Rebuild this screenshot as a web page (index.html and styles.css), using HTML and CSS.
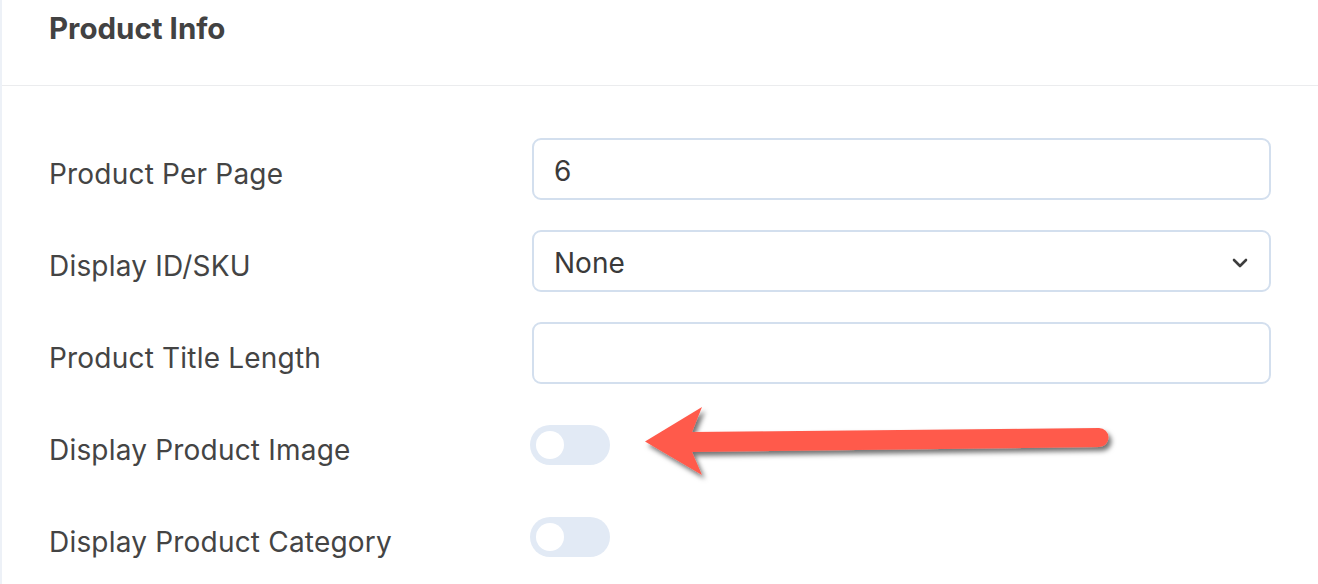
FILE: index.html
```html
<!DOCTYPE html>
<html>
<head>
<meta charset="utf-8">
<link rel="stylesheet" href="styles.css">
</head>
<body>
<div class="card">
  <div class="card-header"><h2 class="title">Product Info</h2></div>
  <div class="form">
    <label class="label">Product Per Page</label>
    <div class="field"><input class="input" type="text" value="6"></div>

    <label class="label">Display ID/SKU</label>
    <div class="field select-wrap">
      <div class="input select">None</div>
      <svg class="chevron" width="16" height="10" viewBox="0 0 16 10"><path d="M2 2 L8 8 L14 2" fill="none" stroke="#3d3d3d" stroke-width="2.6" stroke-linecap="round" stroke-linejoin="round"/></svg>
    </div>

    <label class="label">Product Title Length</label>
    <div class="field"><input class="input" type="text" value=""></div>

    <label class="label">Display Product Image</label>
    <div class="field"><span class="toggle"><span class="knob"></span></span></div>

    <label class="label">Display Product Category</label>
    <div class="field"><span class="toggle"><span class="knob"></span></span></div>
  </div>
  <svg class="arrow" width="1318" height="584" viewBox="0 0 1318 584">
    <defs>
      <filter id="sh" x="-10%" y="-50%" width="120%" height="200%">
        <feDropShadow dx="3" dy="4" stdDeviation="2.5" flood-color="#000" flood-opacity="0.55"/>
      </filter>
    </defs>
    <path filter="url(#sh)" fill="#ff5a4c" d="M645 441.5 L702 407 L692 432 L1099 428 A9.5 9.5 0 0 1 1099 447 L692 452 L702 475 Z"/>
  </svg>
</div>
</body>
</html>
```

FILE: styles.css
```css
html, body {
  margin: 0;
  padding: 0;
  background: #ffffff;
}
body {
  font-family: "Inter", "Liberation Sans", sans-serif;
  color: #454545;
  width: 1318px;
  height: 584px;
  overflow: hidden;
}
.card {
  position: relative;
  border-left: 2px solid #edf1f7;
  height: 584px;
}
.card-header {
  height: 86px;
  border-bottom: 1px solid #ebecee;
  padding-left: 47px;
  box-sizing: border-box;
}
.title {
  margin: 0;
  padding-top: 10px;
  font-size: 29.5px;
  font-weight: 650;
  color: #424242;
  letter-spacing: 0;
}
.form {
  display: grid;
  grid-template-columns: 483px 739px;
  grid-auto-rows: 62px;
  row-gap: 30px;
  padding: 52px 47px 0 47px;
  align-items: center;
}
.label {
  font-size: 28px;
  color: #444;
  padding-top: 9px;
  letter-spacing: 0.2px;
}
.field {
  height: 62px;
  display: flex;
  align-items: center;
}
.input {
  box-sizing: border-box;
  width: 739px;
  height: 62px;
  border: 2px solid #d3dfee;
  border-radius: 9px;
  padding: 3px 0 0 20px;
  font-family: inherit;
  font-size: 28px;
  color: #3a3a3a;
  background: #fff;
  outline: none;
  display: flex;
  align-items: center;
}
.select-wrap {
  position: relative;
}
.chevron {
  position: absolute;
  left: 700px;
  top: 28px;
}
.toggle {
  display: inline-block;
  position: relative;
  width: 80px;
  height: 40px;
  border-radius: 20px;
  background: #e2eaf5;
  margin-left: -2px;
}
.knob {
  position: absolute;
  left: 6px;
  top: 6px;
  width: 28px;
  height: 28px;
  border-radius: 50%;
  background: #fff;
}
.arrow {
  position: absolute;
  left: -2px;
  top: 0;
  pointer-events: none;
}
```
